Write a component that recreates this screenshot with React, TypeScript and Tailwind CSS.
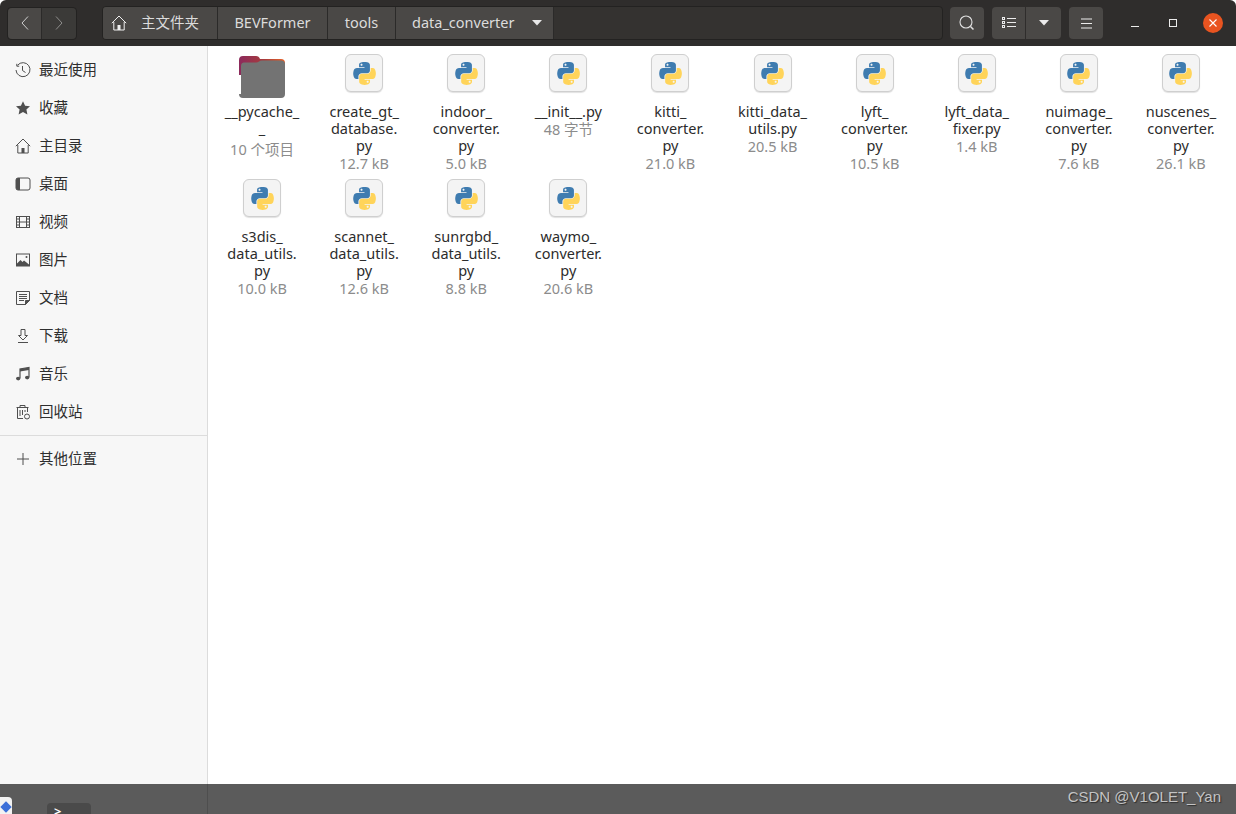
const cjk = '"Noto Sans", "Noto Sans CJK SC", sans-serif'

const sidebarItems = [
  { label: '最近使用', icon: 'recent' },
  { label: '收藏', icon: 'star' },
  { label: '主目录', icon: 'home' },
  { label: '桌面', icon: 'desktop' },
  { label: '视频', icon: 'video' },
  { label: '图片', icon: 'picture' },
  { label: '文档', icon: 'doc' },
  { label: '下载', icon: 'download' },
  { label: '音乐', icon: 'music' },
  { label: '回收站', icon: 'trash' },
]

const files = [
  { lines: ['__pycache_', '_'], size: '10 个项目', folder: true },
  { lines: ['create_gt_', 'database.', 'py'], size: '12.7 kB' },
  { lines: ['indoor_', 'converter.', 'py'], size: '5.0 kB' },
  { lines: ['__init__.py'], size: '48 字节' },
  { lines: ['kitti_', 'converter.', 'py'], size: '21.0 kB' },
  { lines: ['kitti_data_', 'utils.py'], size: '20.5 kB' },
  { lines: ['lyft_', 'converter.', 'py'], size: '10.5 kB' },
  { lines: ['lyft_data_', 'fixer.py'], size: '1.4 kB' },
  { lines: ['nuimage_', 'converter.', 'py'], size: '7.6 kB' },
  { lines: ['nuscenes_', 'converter.', 'py'], size: '26.1 kB' },
  { lines: ['s3dis_', 'data_utils.', 'py'], size: '10.0 kB' },
  { lines: ['scannet_', 'data_utils.', 'py'], size: '12.6 kB' },
  { lines: ['sunrgbd_', 'data_utils.', 'py'], size: '8.8 kB' },
  { lines: ['waymo_', 'converter.', 'py'], size: '20.6 kB' },
]

function SideIcon({ name }: { name: string }) {
  const s = { fill: 'none', stroke: '#4f4f4f', strokeWidth: 1 }
  return (
    <svg width="16" height="16" viewBox="0 0 16 16" className="shrink-0">
      {name === 'recent' && (
        <g {...s}>
          <path d="M2.6 3.2A7 7 0 1 1 1 8" />
          <path d="M1.8 1.8v2.4h2.4M7.5 4v4.5l3 2" />
        </g>
      )}
      {name === 'star' && <path d="M8 1.2l2.1 4.5 4.9.6-3.6 3.3 1 4.9L8 12.1l-4.4 2.4 1-4.9L1 6.3l4.9-.6z" fill="#4f4f4f" />}
      {name === 'home' && (
        <g {...s}>
          <path d="M.8 8.2L8 1l7.2 7.2M2.8 7v8h10.4V7" />
          <rect x="6.5" y="10" width="3" height="5" fill="#4f4f4f" stroke="none" />
        </g>
      )}
      {name === 'desktop' && (
        <g>
          <rect x="1" y="2" width="14" height="12" rx="2" fill="none" stroke="#4f4f4f" />
          <path d="M3 2H5V14H3a2 2 0 0 1-2-2V4a2 2 0 0 1 2-2z" fill="#4f4f4f" />
        </g>
      )}
      {name === 'video' && (
        <g {...s}>
          <rect x="1.5" y="2.5" width="13" height="11" />
          <path d="M4.5 2.5v11M11.5 2.5v11M4.5 8h7M1.5 5h3M1.5 8h3M1.5 11h3M11.5 5h3M11.5 8h3M11.5 11h3" />
        </g>
      )}
      {name === 'picture' && (
        <g>
          <rect x="1.5" y="2" width="13" height="12" fill="none" stroke="#4f4f4f" />
          <path d="M2 14v-2.5l3.5-3.5 2 2 1.500-1.500 5 4V14z" fill="#4f4f4f" />
          <circle cx="11.500" cy="5" r="1" fill="#4f4f4f" />
        </g>
      )}
      {name === 'doc' && (
        <g {...s}>
          <path d="M1.500 1.500h13v9l-4 4h-9z" />
          <path d="M4 4.500h8M4 6.500h8M4 8.500h8M4 10.500h5" />
          <path d="M10.500 14.500v-4h4z" fill="#4f4f4f" />
        </g>
      )}
      {name === 'download' && (
        <g {...s}>
          <path d="M6 1.500h4v6h2.500L8 12 3.500 7.500H6z" />
          <path d="M3 14.500h10" />
        </g>
      )}
      {name === 'music' && (
        <g>
          <path d="M5 12V3l9-1.500V11" fill="none" stroke="#4f4f4f" strokeWidth="1.200" />
          <path d="M5 3l9-1.500V4L5 5.500z" fill="#4f4f4f" />
          <ellipse cx="3.200" cy="12.600" rx="2.200" ry="1.800" fill="#4f4f4f" />
          <ellipse cx="12.200" cy="11.600" rx="2.200" ry="1.800" fill="#4f4f4f" />
        </g>
      )}
      {name === 'trash' && (
        <g {...s}>
          <path d="M1.500 3.500h12M5 3.500V1.500h5v2M2.500 3.500V14.500H8M12.500 3.500V8M5 6v6M7.500 6v5M10 6v2" />
          <circle cx="12" cy="12.500" r="2.500" />
        </g>
      )}
    </svg>
  )
}

function PythonIcon() {
  return (
    <div className="w-[38px] h-[38px] rounded-[6px] border border-[#cfcfcf] bg-[#f4f4f4] flex items-center justify-center shadow-[0_1px_1px_rgba(0,0,0,0.12)]">
      <svg width="23" height="23" viewBox="0 0 110 110">
        <path
          fill="#3f7cb0"
          fillRule="evenodd"
          d="M54.9.1c-4.6 0-8.900.4-12.700 1.100C31 3.200 29 7.300 29 14.900V25h26v3.400H19.200c-7.600 0-14.200 4.500-16.300 13.200-2.400 9.900-2.500 16.100 0 26.500 1.900 7.700 6.300 13.200 13.900 13.200h9v-11.900c0-8.600 7.400-16.100 16.300-16.100h25.900c7.200 0 13-5.900 13-13.200V14.900c0-7-5.900-12.300-13-13.500C63.600.4 59.400.1 54.900.1zM40.800 8.100c2.700 0 4.900 2.200 4.900 4.900 0 2.700-2.200 4.900-4.900 4.900s-4.900-2.200-4.900-4.900c0-2.700 2.200-4.900 4.900-4.900z"
        />
        <path
          fill="#ffd45a"
          fillRule="evenodd"
          d="M84.700 28.400v11.600c0 9-7.600 16.500-16.300 16.500H42.500c-7.100 0-13 6.100-13 13.200v24.800c0 7 6.100 11.200 13 13.200 8.200 2.400 16.100 2.900 25.900 0 6.500-1.900 13-5.700 13-13.200v-9.900H55.500V81h38.900c7.500 0 10.400-5.300 13-13.200 2.700-8.200 2.600-16 0-26.500-1.900-7.500-5.400-13.200-13-13.200h-9.700zM70.100 89.200c2.700 0 4.900 2.200 4.900 4.900 0 2.700-2.200 4.900-4.900 4.900-2.700 0-4.900-2.200-4.900-4.900 0-2.700 2.200-4.900 4.900-4.900z"
        />
      </svg>
    </div>
  )
}

function FolderIcon() {
  return (
    <svg width="46" height="42" viewBox="0 0 46 42">
      <defs>
        <linearGradient id="fold" x1="0" x2="1" y1="0" y2="0">
          <stop offset="0" stopColor="#8c2a5c" />
          <stop offset="0.55" stopColor="#a83c3c" />
          <stop offset="1" stopColor="#e8642a" />
        </linearGradient>
      </defs>
      <path d="M4 0h13q3 0 4 3h21q4 0 4 4v12H0V4q0-4 4-4z" fill="url(#fold)" />
      <path d="M2 38V10q0-3.500 3-3.500h12q2 0 3-1 1-1 3-1h19q4 0 4 3.500v30q0 4-4 4H4q-4 0-4-4z" fill="#737373" />
    </svg>
  )
}

function FileItem({ file }: { file: (typeof files)[number] }) {
  return (
    <div className="flex flex-col items-center">
      <div className="h-[48px] flex items-end justify-center">
        {file.folder ? <FolderIcon /> : <div className="pb-[6px]"><PythonIcon /></div>}
      </div>
      <div className="mt-[5px] text-center text-[14.5px] leading-[17px] text-[#2c2c2c]">
        {file.lines.map((l, i) => (
          <div key={i} className="whitespace-pre">{l}</div>
        ))}
      </div>
      <div className={`text-center text-[14.5px] text-[#8c8c8c] ${file.folder ? 'leading-[22px] mt-[1px]' : 'leading-[17px] mt-[1px]'}`}>
        {file.size}
      </div>
    </div>
  )
}

function HeaderButton({ children, className }: { children: React.ReactNode; className: string }) {
  return (
    <div className={`h-[32px] flex items-center justify-center bg-[#4a4846] ${className}`}>
      {children}
    </div>
  )
}

export default function App() {
  return (
    <div className="h-screen w-full flex flex-col overflow-hidden bg-white" style={{ fontFamily: cjk }}>
      {/* header bar */}
      <div className="h-[46px] shrink-0 bg-[#2f2d2c] flex items-center pl-[7px] rounded-t-[6px] text-[#dcdcdc] text-[14.5px]">
        <div className="flex w-[70px] h-[33px] rounded-[4px] border border-[#232221]">
          <div className="w-[34px] flex items-center justify-center bg-[#4a4846] border-r border-[#2b2a29] rounded-l-[4px]">
            <svg width="8" height="14" viewBox="0 0 8 14"><path d="M7 .5L1 7l6 6.500" fill="none" stroke="#cfcfcf" /></svg>
          </div>
          <div className="flex-1 flex items-center justify-center bg-[#3b3a38] rounded-r-[4px]">
            <svg width="8" height="14" viewBox="0 0 8 14"><path d="M1 .5L7 7l-6 6.500" fill="none" stroke="#8e8d8b" /></svg>
          </div>
        </div>

        <div className="ml-[25px] w-[841px] h-[34px] flex rounded-[4px] border border-[#232221] bg-[#343230] overflow-hidden">
          <div className="w-[115px] flex items-center bg-[#4a4846] border-r border-[#2b2a29] pl-[8px]">
            <svg width="16" height="16" viewBox="0 0 16 16">
              <path d="M.8 8.200L8 1l7.200 7.200M2.800 7v8h10.400V7" fill="none" stroke="#f0f0f0" />
              <rect x="6.500" y="10" width="3" height="5" fill="#f0f0f0" />
            </svg>
            <span className="ml-[14px]">主文件夹</span>
          </div>
          <div className="w-[110px] flex items-center justify-center bg-[#4a4846] border-r border-[#2b2a29]">BEVFormer</div>
          <div className="w-[68px] flex items-center justify-center bg-[#4a4846] border-r border-[#2b2a29]">tools</div>
          <div className="w-[158px] flex items-center bg-[#4a4846] border-r border-[#2b2a29] pl-[16px]">
            <span>data_converter</span>
            <svg width="10" height="6" viewBox="0 0 10 6" className="ml-[17px]"><path d="M0 0h10L5 5.500z" fill="#e8e8e8" /></svg>
          </div>
        </div>

        <HeaderButton className="ml-[7px] w-[34px] rounded-[4px]">
          <svg width="16" height="16" viewBox="0 0 16 16">
            <circle cx="7" cy="7" r="6" fill="none" stroke="#e0e0e0" strokeWidth="1.100" />
            <path d="M11.500 11.500L14.500 14.500" stroke="#e0e0e0" strokeWidth="1.500" />
          </svg>
        </HeaderButton>

        <HeaderButton className="ml-[8px] w-[34px] rounded-l-[4px] border-r border-[#2f2d2c]">
          <svg width="14" height="12" viewBox="0 0 14 12">
            <g fill="none" stroke="#ececec">
              <rect x=".5" y=".5" width="2" height="2" />
              <rect x=".5" y="4.500" width="2" height="2" />
              <rect x=".5" y="8.500" width="2" height="2" />
              <path d="M5 1.500h9M5 5.500h9M5 9.500h9" />
            </g>
          </svg>
        </HeaderButton>
        <HeaderButton className="w-[35px] rounded-r-[4px]">
          <svg width="10" height="6" viewBox="0 0 10 6"><path d="M0 0h10L5 5.500z" fill="#ececec" /></svg>
        </HeaderButton>

        <HeaderButton className="ml-[8px] w-[34px] rounded-[4px]">
          <svg width="11" height="11" viewBox="0 0 11 11"><path d="M0 1h11M0 5.500h11M0 10h11" stroke="#ececec" /></svg>
        </HeaderButton>

        <div className="ml-[26px] w-[12px] flex justify-center mt-[6px]"><div className="w-[8px] h-[1px] bg-[#ececec]" /></div>
        <div className="ml-[28px] w-[8px] h-[8px] border border-[#ececec]" />
        <div className="ml-[26px] w-[20px] h-[20px] rounded-full bg-[#e95420] flex items-center justify-center">
          <svg width="8" height="8" viewBox="0 0 8 8"><path d="M.5.500l7 7M7.500.500l-7 7" stroke="#fff" strokeWidth="1.100" /></svg>
        </div>
      </div>

      <div className="flex-1 flex min-h-0">
        {/* places sidebar */}
        <div className="w-[208px] shrink-0 bg-[#f7f7f7] border-r border-[#dcdcdc] pt-[5px] text-[14.5px] text-[#2e2e2e]">
          {sidebarItems.map((item) => (
            <div key={item.label} className="h-[38px] flex items-center pl-[15px] gap-[8px]">
              <SideIcon name={item.icon} />
              <span>{item.label}</span>
            </div>
          ))}
          <div className="mt-[4px] border-t border-[#dcdcdc] pt-[4px]">
            <div className="h-[38px] flex items-center pl-[17px] gap-[10px]">
              <svg width="12" height="12" viewBox="0 0 12 12" className="shrink-0"><path d="M6 0v12M0 6h12" stroke="#4f4f4f" /></svg>
              <span>其他位置</span>
            </div>
          </div>
        </div>

        {/* file grid */}
        <div className="flex-1 pl-[3px] pr-[4px] pt-[4px] grid grid-cols-10 auto-rows-[125px]">
          {files.map((f, i) => (
            <FileItem key={i} file={f} />
          ))}
        </div>
      </div>

      {/* strip of the desktop below the window */}
      <div className="h-[30px] shrink-0 bg-[#5b5b5b] flex overflow-hidden">
        <div className="w-[208px] border-r border-[#4e4e4e] flex items-start">
          <div className="mt-[13px] w-[12px] h-[24px] bg-[#f2f2f2] rounded-tr-[4px] flex justify-center items-end">
            <div className="w-[8px] h-[8px] mb-[10px] bg-[#3b6fd8] rotate-45" />
          </div>
          <div className="ml-[35px] mt-[19px] w-[44px] h-[24px] bg-[#4a4a4a] rounded-[4px] pl-[7px] text-[13px] leading-[16px] font-bold text-white">&gt;</div>
        </div>
        <div className="flex-1 flex justify-end pr-[15px] pt-[3px]">
          <span
            className="text-[15px] leading-[20px] text-[#c4c4c4] [text-shadow:1px_1px_1px_rgba(0,0,0,0.5)]"
            style={{ fontFamily: '"Liberation Sans", sans-serif' }}
          >
            CSDN @V1OLET_Yan
          </span>
        </div>
      </div>
    </div>
  )
}
